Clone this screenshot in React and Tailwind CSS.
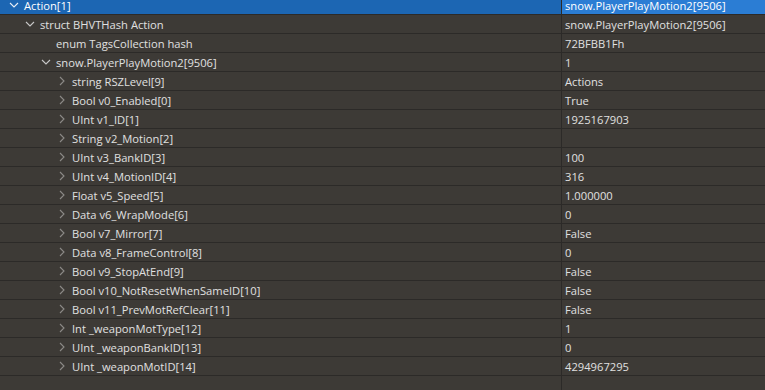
const rows = [
  { indent: 0, arrow: 'down', label: 'Action[1]', value: 'snow.PlayerPlayMotion2[9506]', selected: true },
  { indent: 1, arrow: 'down', label: 'struct BHVTHash Action', value: 'snow.PlayerPlayMotion2[9506]' },
  { indent: 2, arrow: null, label: 'enum TagsCollection hash', value: '72BFBB1Fh' },
  { indent: 2, arrow: 'down', label: 'snow.PlayerPlayMotion2[9506]', value: '1' },
  { indent: 3, arrow: 'right', label: 'string RSZLevel[9]', value: 'Actions' },
  { indent: 3, arrow: 'right', label: 'Bool v0_Enabled[0]', value: 'True' },
  { indent: 3, arrow: 'right', label: 'UInt v1_ID[1]', value: '1925167903' },
  { indent: 3, arrow: 'right', label: 'String v2_Motion[2]', value: '' },
  { indent: 3, arrow: 'right', label: 'UInt v3_BankID[3]', value: '100' },
  { indent: 3, arrow: 'right', label: 'UInt v4_MotionID[4]', value: '316' },
  { indent: 3, arrow: 'right', label: 'Float v5_Speed[5]', value: '1.000000' },
  { indent: 3, arrow: 'right', label: 'Data v6_WrapMode[6]', value: '0' },
  { indent: 3, arrow: 'right', label: 'Bool v7_Mirror[7]', value: 'False' },
  { indent: 3, arrow: 'right', label: 'Data v8_FrameControl[8]', value: '0' },
  { indent: 3, arrow: 'right', label: 'Bool v9_StopAtEnd[9]', value: 'False' },
  { indent: 3, arrow: 'right', label: 'Bool v10_NotResetWhenSameID[10]', value: 'False' },
  { indent: 3, arrow: 'right', label: 'Bool v11_PrevMotRefClear[11]', value: 'False' },
  { indent: 3, arrow: 'right', label: 'Int _weaponMotType[12]', value: '1' },
  { indent: 3, arrow: 'right', label: 'UInt _weaponBankID[13]', value: '0' },
  { indent: 3, arrow: 'right', label: 'UInt _weaponMotID[14]', value: '4294967295' },
]

const Chevron = ({ dir, light }) => (
  <svg width="10" height="10" viewBox="0 0 10 10" className="shrink-0">
    {dir === 'down' ? (
      <path d="M1 3 L5 7 L9 3" fill="none" stroke={light ? '#e8eef6' : '#c8c8c8'} strokeWidth="1.1" />
    ) : (
      <path d="M3 1 L7 5 L3 9" fill="none" stroke="#8c8a87" strokeWidth="1.1" />
    )}
  </svg>
)

const Row = ({ row }) => {
  const pad = 9 + row.indent * 16
  return (
    <div className="flex h-[19px] shrink-0 border-b border-[#2c2a28]">
      <div
        className={`w-[562px] shrink-0 flex items-center border-r border-[#2c2a28] ${row.selected ? 'bg-[#1c66b3]' : ''}`}
        style={{ paddingLeft: pad }}
      >
        {row.arrow ? <Chevron dir={row.arrow} light={row.selected} /> : <span className="w-[10px] shrink-0" />}
        <span className={`ml-[5px] pt-[2px] whitespace-nowrap ${row.selected ? 'text-white' : 'text-[#e0e0e0]'}`}>{row.label}</span>
      </div>
      <div className={`flex-1 flex items-center pl-[3px] pt-[2px] whitespace-nowrap ${row.selected ? 'bg-[#2b7dd4] text-white' : 'text-[#e0e0e0]'}`}>
        {row.value}
      </div>
    </div>
  )
}

const App = () => {
  return (
    <div className="w-[765px] h-[390px] overflow-hidden bg-[#3d3a36] text-[11.2px] leading-none" style={{ fontFamily: '"Open Sans", "Noto Sans", sans-serif' }}>
      <div className="-mt-[4px] flex flex-col h-[394px]">
        {rows.map((r, i) => (
          <Row key={i} row={r} />
        ))}
        <div className="flex flex-1">
          <div className="w-[562px] border-r border-[#2c2a28]" />
        </div>
      </div>
    </div>
  )
}

export default App
